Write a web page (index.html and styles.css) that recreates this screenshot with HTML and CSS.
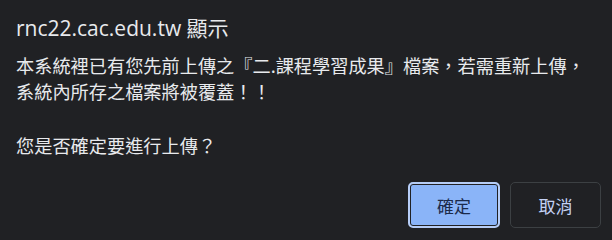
FILE: index.html
```html
<!DOCTYPE html>
<html lang="zh-Hant">
<head>
<meta charset="utf-8">
<title>rnc22.cac.edu.tw 顯示</title>
<link rel="stylesheet" href="styles.css">
</head>
<body>
<div class="dialog">
  <div class="title">rnc22.cac.edu.tw 顯示</div>
  <div class="message">
    <div class="line">本系統裡已有您先前上傳之『二.課程學習成果』檔案，若需重新上傳，</div>
    <div class="line">系統內所存之檔案將被覆蓋！！</div>
    <div class="line blank"></div>
    <div class="line">您是否確定要進行上傳？</div>
  </div>
  <div class="actions">
    <button class="btn btn-primary">確定</button>
    <button class="btn btn-secondary">取消</button>
  </div>
</div>
</body>
</html>
```

FILE: styles.css
```css
html, body {
  margin: 0;
  padding: 0;
  background: #202124;
}

.dialog {
  width: 612px;
  height: 235px;
  box-sizing: border-box;
  padding: 15px 11px 7px 16px;
  display: flex;
  flex-direction: column;
  color: #e8eaed;
  font-family: "Open Sans", "Noto Sans CJK TC", sans-serif;
}

.title {
  font-size: 21px;
  line-height: 27px;
  height: 27px;
  white-space: nowrap;
}

.message {
  margin-top: 9.6px;
  font-family: "Noto Sans CJK TC", "Noto Sans", sans-serif;
  font-size: 18.2px;
  display: flex;
  flex-direction: column;
}

.line {
  height: 26.7px;
  line-height: 26.7px;
  white-space: nowrap;
}

.actions {
  margin-top: auto;
  display: flex;
  justify-content: flex-end;
  gap: 10px;
}

.btn {
  height: 46px;
  box-sizing: border-box;
  border-radius: 5px;
  font-family: "Noto Sans CJK TC", sans-serif;
  font-size: 17px;
  line-height: 1;
  padding: 0;
  cursor: pointer;
}

.btn-primary {
  width: 92px;
  background: #8ab4f8;
  color: #1b2a4a;
  border: 2px solid #b6cdf7;
  box-shadow: inset 0 0 0 1px #202124;
}

.btn-secondary {
  width: 91px;
  background: #202124;
  color: #c4d2f5;
  border: 1px solid #3c4043;
}
```
